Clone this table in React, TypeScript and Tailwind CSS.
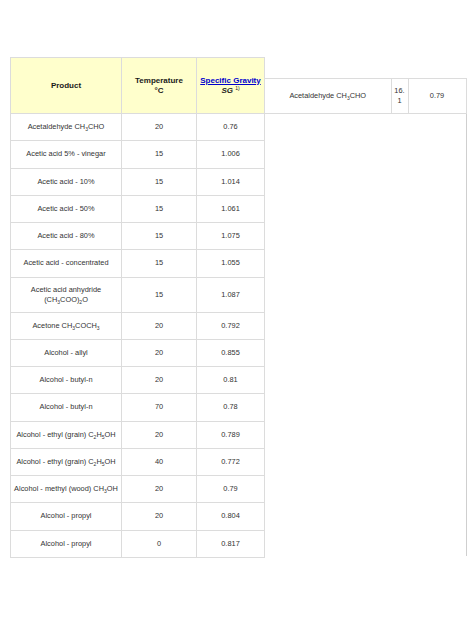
import React from "react";

type Row = { name: React.ReactNode; t: string; sg: string; tall?: boolean };

const S = ({ children }: { children: React.ReactNode }) => (
  <sub className="text-[5px] leading-none align-[-1px]">{children}</sub>
);

const rows: Row[] = [
  { name: <>Acetaldehyde CH<S>3</S>CHO</>, t: "20", sg: "0.76" },
  { name: "Acetic acid 5% - vinegar", t: "15", sg: "1.006" },
  { name: "Acetic acid - 10%", t: "15", sg: "1.014" },
  { name: "Acetic acid - 50%", t: "15", sg: "1.061" },
  { name: "Acetic acid - 80%", t: "15", sg: "1.075" },
  { name: "Acetic acid - concentrated", t: "15", sg: "1.055" },
  {
    name: (
      <>
        Acetic acid anhydride
        <br />
        (CH<S>3</S>COO)<S>2</S>O
      </>
    ),
    t: "15",
    sg: "1.087",
    tall: true,
  },
  { name: <>Acetone CH<S>3</S>COCH<S>3</S></>, t: "20", sg: "0.792" },
  { name: "Alcohol - allyl", t: "20", sg: "0.855" },
  { name: "Alcohol - butyl-n", t: "20", sg: "0.81" },
  { name: "Alcohol - butyl-n", t: "70", sg: "0.78" },
  { name: <>Alcohol - ethyl (grain) C<S>2</S>H<S>5</S>OH</>, t: "20", sg: "0.789" },
  { name: <>Alcohol - ethyl (grain) C<S>2</S>H<S>5</S>OH</>, t: "40", sg: "0.772" },
  { name: <>Alcohol - methyl (wood) CH<S>3</S>OH</>, t: "20", sg: "0.79" },
  { name: "Alcohol - propyl", t: "20", sg: "0.804" },
  { name: "Alcohol - propyl", t: "0", sg: "0.817" },
];

const cell = "border border-[#dcdcdc] text-center align-middle px-0 whitespace-nowrap";

export default function App() {
  return (
    <div
      className="min-h-[632px] w-[474px] bg-white pt-[57px] pl-[10px] text-[7.4px] leading-[10px] text-[#333333]"
      style={{ fontFamily: '"Liberation Sans", Arial, sans-serif' }}
    >
      <div className="flex items-start">
        <table className="border-collapse table-fixed w-[254px]">
          <colgroup>
            <col className="w-[111px]" />
            <col className="w-[75px]" />
            <col className="w-[68px]" />
          </colgroup>
          <thead>
            <tr className="h-[56px] bg-[#ffffcc] font-bold text-[#1a1a1a]">
              <th className={cell + " text-[8px]"}>Product</th>
              <th className={cell + " text-[8px]"}>
                Temperature
                <br />
                °C
              </th>
              <th className={cell + " text-[8px]"}>
                <a href="#" className="text-[#0000cc] underline">
                  Specific Gravity
                </a>
                <br />
                <i>SG</i>{" "}
                <sup className="text-[5px] font-normal leading-none">1)</sup>
              </th>
            </tr>
          </thead>
          <tbody>
            {rows.map((r, i) => (
              <tr key={i} className={r.tall ? "h-[35px]" : "h-[27.25px]"}>
                <td className={cell}>{r.name}</td>
                <td className={cell}>{r.t}</td>
                <td className={cell}>{r.sg}</td>
              </tr>
            ))}
          </tbody>
        </table>

        <div className="mt-[21px] w-[202px] h-[478px] border-r border-[#cfcfcf]">
          <table className="border-collapse table-fixed w-[201px]">
            <colgroup>
              <col className="w-[126px]" />
              <col className="w-[17px]" />
              <col className="w-[58px]" />
            </colgroup>
            <tbody>
              <tr className="h-[35px]">
                <td className={cell + " border-l-0"}>
                  Acetaldehyde CH<S>3</S>CHO
                </td>
                <td className={cell}>
                  16.
                  <br />1
                </td>
                <td className={cell}>0.79</td>
              </tr>
            </tbody>
          </table>
        </div>
      </div>
    </div>
  );
}
